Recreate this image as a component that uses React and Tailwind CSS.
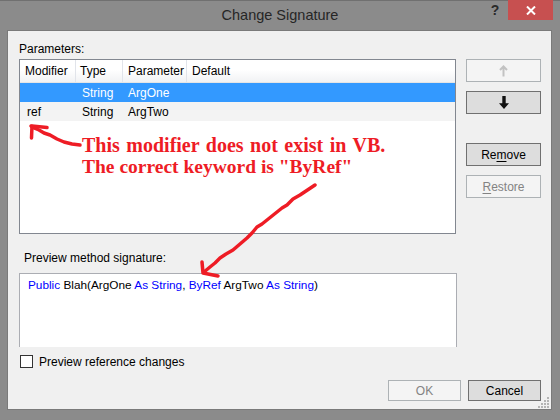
import React from "react";

const ui = "font-['Liberation_Sans',Arial,sans-serif]";

function UpArrow() {
  return (
    <svg width="9" height="12" viewBox="0 0 9 12">
      <path d="M4.5 11.5V1.5M1 5 4.5 1.5 8 5" stroke="#c2c2c2" strokeWidth="2" fill="none" />
    </svg>
  );
}

function DownArrow() {
  return (
    <svg width="10" height="13" viewBox="0 0 10 13">
      <path d="M3.3 0h3.4v7.2H10L5 13 0 7.2h3.3z" fill="#111" />
    </svg>
  );
}

function Btn({ children, disabled, className = "" }) {
  const look = disabled
    ? "bg-[#f4f4f4] border-[#adb2b5] text-[#838383]"
    : "bg-[#dddddd] border-[#707070] text-black";
  return (
    <div className={`flex items-center justify-center border text-[12px] ${look} ${className}`}>
      {children}
    </div>
  );
}

function Grip() {
  const dots = [
    [9, 0], [9, 3], [6, 3], [9, 6], [6, 6], [3, 6], [9, 9], [6, 9], [3, 9], [0, 9],
  ];
  return (
    <svg width="11" height="11" viewBox="0 0 11 11" className="absolute right-[2px] bottom-[1px]">
      {dots.map(([x, y], i) => (
        <rect key={i} x={x} y={y} width="2" height="2" fill="#b4b4b4" />
      ))}
    </svg>
  );
}

export default function App() {
  return (
    <div className={`relative w-[560px] h-[420px] bg-[#8b8b8b] overflow-hidden ${ui}`}>
      {/* title bar */}
      <div className="grid grid-cols-[1fr_auto_1fr] h-[30px] border-t border-[#707070]">
        <div />
        <div className="text-[14.5px] text-[#262626] pt-[5px] leading-[18px]">Change Signature</div>
        <div className="flex justify-end items-start pr-[7px] -mt-px">
          <div className="w-[26px] h-[20px] flex items-center justify-center text-[14px] font-bold text-[#2a2a2a] pt-px">
            ?
          </div>
          <div className="w-[45px] h-[20px] bg-[#c75050] flex items-center justify-center">
            <svg width="10" height="9" viewBox="0 0 10 9">
              <path d="M1 0.5 9 8.5M9 0.5 1 8.5" stroke="#fff" strokeWidth="2" />
            </svg>
          </div>
        </div>
      </div>

      {/* client area */}
      <div className="relative ml-[7px] w-[545px] h-[380px] bg-[#f0f0f0] border border-[#7a7a7a] pl-[11px] pr-[10px] pt-[10px] text-[12px] text-black">
        <div className="h-[16px] leading-[16px]">Parameters:</div>
        <div className="flex gap-[10px] mt-[2px]">
          {/* parameter list */}
          <div className="relative w-[437px] h-[175px] border border-[#828790] bg-white">
            <div className="flex h-[23px] bg-linear-to-b from-white from-45% to-[#f1f2f4] border-b border-[#e5e5e5]">
              <div className="w-[56px] flex items-center pl-[5px] border-r border-[#e1e4ea]">Modifier</div>
              <div className="w-[47px] flex items-center pl-[4px] border-r border-[#e1e4ea]">Type</div>
              <div className="w-[64px] flex items-center pl-[5px] border-r border-[#e1e4ea]">Parameter</div>
              <div className="flex-1 flex items-center pl-[5px]">Default</div>
            </div>
            <div className="flex h-[19px] items-center bg-[#3399ff] text-white">
              <div className="w-[56px] pl-[7px]" />
              <div className="w-[47px] pl-[6px]">String</div>
              <div className="w-[64px] pl-[5px]">ArgOne</div>
            </div>
            <div className="flex h-[19px] items-center bg-[#f3f3f3]">
              <div className="w-[56px] pl-[7px]">ref</div>
              <div className="w-[47px] pl-[6px]">String</div>
              <div className="w-[64px] pl-[5px]">ArgTwo</div>
            </div>

            {/* annotation */}
            <div className="absolute left-[62px] top-[74px] font-['Liberation_Serif',Georgia,serif] font-bold leading-[22px] text-[#ee1c25] whitespace-nowrap">
              <div className="text-[20px] [word-spacing:1.5px]">This modifier does not exist in VB.</div>
              <div className="text-[19.5px]">The correct keyword is "ByRef"</div>
            </div>
          </div>

          {/* side buttons */}
          <div className="w-[75px] flex flex-col">
            <Btn disabled className="h-[23px]">
              <UpArrow />
            </Btn>
            <Btn className="h-[23px] mt-[9px]">
              <DownArrow />
            </Btn>
            <Btn className="h-[23px] mt-[29px]">
              <span>
                Re<span className="underline underline-offset-2">m</span>ove
              </span>
            </Btn>
            <Btn disabled className="h-[23px] mt-[9px]">
              <span>
                <span className="underline underline-offset-2">R</span>estore
              </span>
            </Btn>
          </div>
        </div>

        <div className="h-[16px] leading-[16px] mt-[16px] pl-[5px]">Preview method signature:</div>
        <div className="w-[438px] h-[74px] mt-[7px] bg-white border-t border-l border-r border-[#abadb3] pl-[8px] pt-[3px] leading-[16px] text-[11.8px]">
          <span className="text-[#0000ff]">Public</span> Blah(ArgOne{" "}
          <span className="text-[#0000ff]">As String</span>,{" "}
          <span className="text-[#0000ff]">ByRef</span> ArgTwo{" "}
          <span className="text-[#0000ff]">As String</span>)
        </div>

        <div className="flex items-center mt-[8px] h-[13px]">
          <div className="w-[13px] h-[13px] ml-px border border-[#333333] bg-white" />
          <div className="ml-[6px] leading-[16px]">Preview reference changes</div>
        </div>

        <div className="flex justify-end gap-[7px] mt-[12px]">
          <Btn disabled className="w-[73px] h-[21px]">OK</Btn>
          <Btn className="w-[73px] h-[21px]">Cancel</Btn>
        </div>

        <Grip />
      </div>

      {/* hand-drawn arrows over the dialog */}
      <svg
        width="560"
        height="420"
        viewBox="0 0 560 420"
        className="absolute inset-0 pointer-events-none"
        fill="none"
        stroke="#ee1c25"
        strokeWidth="3.5"
        strokeLinecap="round"
        strokeLinejoin="round"
      >
        <path d="M80 145 L72 144 L64 142 L57 139 L50 135 L44 133 L39 130 L34 128 L31 126" />
        <path d="M47 127.5 L32 126 L31.5 138" />
        <path d="M315 185 L306 191 L300 195 L293 199 L287 205 L282 208 L277 212 L272 216 L267 220 L262 224 L257 227 L252 233 L247 238 L240 244 L233 250 L226 254 L220 258 L215 263 L210 267 L204 272" />
        <path d="M202 262 L203 273 L218 276" />
      </svg>
    </div>
  );
}
